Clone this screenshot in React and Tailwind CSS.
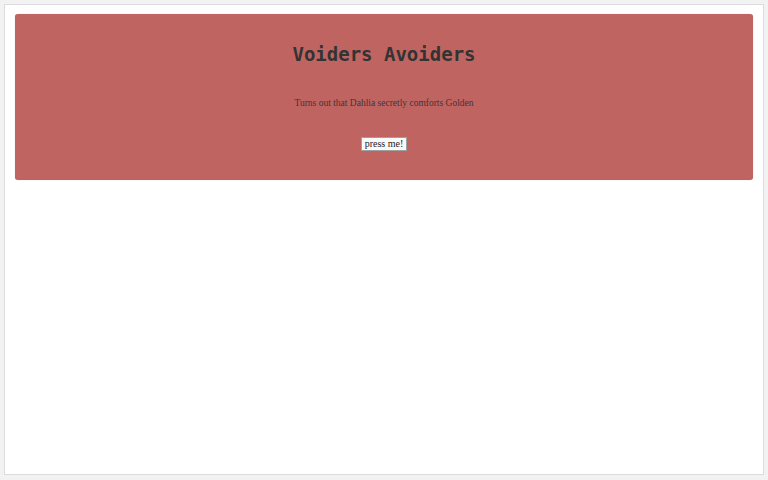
import React, { useState } from "react";

export default function App() {
    const [count, setCount] = useState(0);

    return (
        <div className="min-h-screen bg-[#f2f2f2] p-[4px]">
            <div className="h-[471px] bg-white border border-[#dcdcdc] px-[10px] pt-[9px]">
                <div className="bg-[#c06462] rounded-[3px] flex flex-col items-center pt-[29px] pb-[29px] shadow-[0_0_1px_rgba(0,0,0,0.3)]">
                    <h1 className="text-[19px] leading-[22px] font-bold text-[#333333] font-['DejaVu_Sans_Mono',monospace]">
                        Voiders Avoiders
                    </h1>
                    <p className="mt-[32px] text-[9.5px] leading-[12px] text-[#443333] font-['Liberation_Serif',serif]">
                        Turns out that Dahlia secretly comforts Golden
                    </p>
                    <button
                        onClick={() => setCount(count + 1)}
                        className="mt-[28px] h-[14px] px-[3px] bg-[#fafafa] border border-[#a0a0a0] text-[10px] leading-[12px] text-[#222] font-['Liberation_Serif',serif]"
                    >
                        press me!
                    </button>
                </div>
            </div>
        </div>
    );
}
